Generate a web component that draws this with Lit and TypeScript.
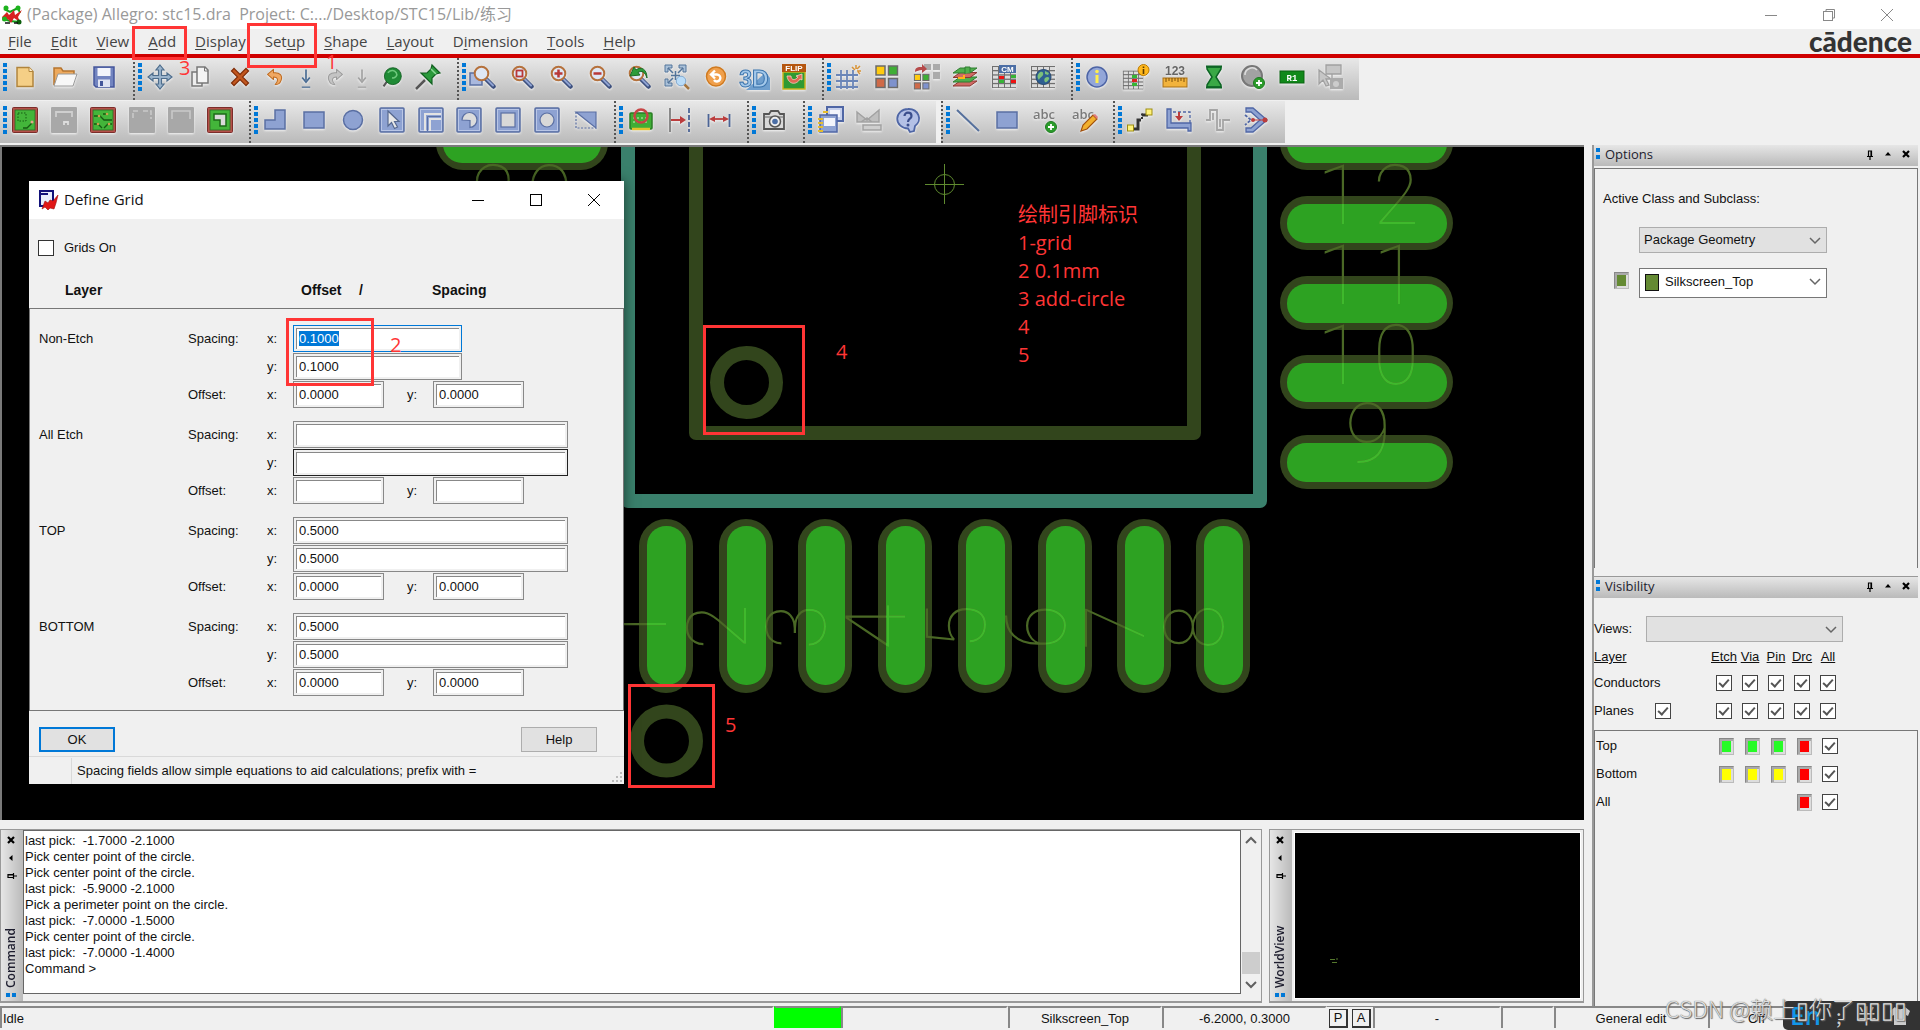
import { LitElement, html, svg, css, nothing } from "lit";
import { customElement } from "lit/decorators.js";

/* ---------- icon building blocks (26 x 26 grid) ---------- */

const BLUE = "#8ea2d2";
const LINE = "#5a6fa3";

const lens = (inner: unknown) => svg`
  <path d="M15 15 L22.500 22.500" stroke="#3c4f7d" stroke-width="4.500" stroke-linecap="round"/>
  <path d="M15.500 15 L22 21.500" stroke="#8ea2d2" stroke-width="2" stroke-linecap="round"/>
  <circle cx="10.500" cy="9.500" r="6.800" fill="#dfe7f4" stroke="#b5713c" stroke-width="2"/>
  ${inner}`;

const board = (inner: unknown) => svg`
  <rect x="0.500" y="0.500" width="25" height="25" rx="1" fill="#b5504a" stroke="#7c2d2a"/>
  <rect x="3" y="3" width="20" height="20" fill="#43b53a" stroke="#2c6b27" stroke-width="0.800"/>
  ${inner}`;

const disabledBoard = (inner: unknown) => svg`
  <rect x="0" y="0" width="26" height="26" rx="1" fill="#a8a8a8"/>
  ${inner}`;

const blueTile = (inner: unknown) => svg`
  <rect x="1" y="1" width="24" height="24" rx="1" fill="${BLUE}" stroke="${LINE}" stroke-width="1.500"/>
  <rect x="2.500" y="2.500" width="21" height="21" fill="none" stroke="#b9c6e6"/>
  ${inner}`;

const cells = (colors: string[]) => svg`
  ${colors.map((c, i) => svg`<rect x="${2 + (i % 2) * 12.5}" y="${2 + Math.floor(i / 2) * 12.5}" width="9" height="9" fill="${c}" stroke="#6b6b6b" stroke-width="1.500"/>`)}`;

const sheet = svg`
  <rect x="1" y="2" width="24" height="22" fill="#6f6f6f"/>
  ${[0, 1, 2, 3, 4].map(r => [0, 1, 2, 3].map(c => svg`<rect x="${2 + c * 6}" y="${3 + r * 4.3}" width="5" height="3" fill="#dcdcdc"/>`))}`;

const greenPlus = svg`
  <circle cx="19" cy="19" r="5.500" fill="#2b9c2b" stroke="#1d7a20"/>
  <path d="M19 16v6M16 19h6" stroke="#fff" stroke-width="1.800"/>`;

const undoArrow = (a: string, b: string) => svg`
  <path d="M3 10 L10 4 V8 C18 7 21 12 19 17 C18 20 15 22 12 22 C16 18 16 13 10 13 V16 Z" fill="${a}" stroke="${b}" stroke-width="1.200" stroke-linejoin="round"/>`;

const downArrow = (c: string) => svg`
  <path d="M13 4v13" stroke="${c}" stroke-width="2"/>
  <path d="M8.500 13.500 L13 19 L17.500 13.500" fill="none" stroke="${c}" stroke-width="2"/>
  <path d="M8 25h10" stroke="${c}" stroke-width="1.500"/>`;

const icons: Record<string, unknown> = {
  newFile: svg`<path d="M5 3.500h12l4 4v15H5z" fill="#f5cf86" stroke="#b0843c" stroke-width="1.500"/><path d="M17 3.500v4h4" fill="#fff0cf" stroke="#b0843c"/>`,
  open: svg`<path d="M2 21V4h7l2 3h11v5" fill="#eda95d" stroke="#b5742e" stroke-width="1.500"/><path d="M2 22 L6 10h19l-4 12z" fill="#f7f7f7" stroke="#9a9a9a"/>`,
  save: svg`<path d="M3 3h20v20H5l-2-2z" fill="#7284c0" stroke="#44569a" stroke-width="1.500"/><rect x="6.500" y="4" width="13" height="8" fill="#f2f4fb"/><rect x="7" y="15.500" width="12" height="7.500" fill="#dfe3f2"/><rect x="9" y="17" width="3" height="5" fill="#44569a"/>`,
  move: svg`<path d="M13 1 L17 6H14.500V11.500H20V9l5 4-5 4v-2.500H14.500V20H17l-4 5-4-5h2.500v-5.500H6V17l-5-4 5-4v2.500h5.500V6H9z" fill="#9bb4cc" stroke="#4e6d8c" stroke-width="1.200"/>`,
  copy: svg`<path d="M5 8h10v14H5z" fill="#eee" stroke="#777" stroke-width="1.500"/><path d="M10 3h8l3 3v13H10z" fill="#f4f4f4" stroke="#777" stroke-width="1.500"/><path d="M17.500 3v4H21" fill="none" stroke="#777"/>`,
  cut: svg`<path d="M7 7 L19 19 M19 7 L7 19" stroke="#7e2c08" stroke-width="4.800" stroke-linecap="square"/><path d="M7 7 L19 19 M19 7 L7 19" stroke="#c0561f" stroke-width="2.500" stroke-linecap="square"/>`,
  undo: undoArrow("#f0a863", "#bd6a20"),
  down: downArrow("#4a6c94"),
  redo: svg`<g transform="translate(26 0) scale(-1 1)">${undoArrow("#c4c4c4", "#9b9b9b")}</g>`,
  downOff: downArrow("#a2a2a2"),
  ball: svg`<path d="M8 17 L3 24" stroke="#555" stroke-width="2.500"/><circle cx="14" cy="12" r="10" fill="#1f8a35" stroke="#0f5a1f"/><path d="M8 8c4-4 8-3 10 0s-1 7-5 6" fill="none" stroke="#6ec97c" stroke-width="1.800"/>`,
  pin: svg`<path d="M10 16 L1 25" stroke="#555" stroke-width="2.500"/><path d="M17 1 L25 9 L21 10 L17 14 L17 20 L6 9 L12 9 L16 5 Z" fill="#2a9a3b" stroke="#125f20" stroke-width="1.200"/><path d="M16 5l5 5" stroke="#8bd996" stroke-width="1.500"/>`,
  zoomArea: svg`<rect x="0" y="9" width="12" height="12" fill="#a9b8de" stroke="${LINE}" stroke-width="1.500"/><g transform="translate(1 0)">${lens(nothing)}</g>`,
  zoomFit: lens(svg`<rect x="7.500" y="6.500" width="6" height="6" fill="none" stroke="#b93838" stroke-width="1.800"/>`),
  zoomIn: lens(svg`<path d="M10.500 5.500v8M6.500 9.500h8" stroke="#b93838" stroke-width="2.500"/>`),
  zoomOut: lens(svg`<path d="M6.500 9.500h8" stroke="#b93838" stroke-width="2.500"/>`),
  zoomPrev: lens(svg`<path d="M21 14 C21 5 15 2 10 6 L8 3 L4 12 L14 11 L12 8.500 C16 6 19 8 21 14z" fill="#2e9c3a" stroke="#1c6b26"/>`),
  zoomCenter: svg`<path d="M1 8V1h7v3H4v4zM15 1h7v7h-3V4h-4zM1 15v7h7v-3H4v-4z" fill="#a9c0d8" stroke="#52749a"/><path d="M9 9L4 4M14 9l5-5M9 14l-5 5M11.500 7v9M7 11.500h9" fill="none" stroke="#52749a" stroke-width="1.500"/><circle cx="17" cy="17" r="4.800" fill="#b9dcf8" stroke="#7fa6cd"/><path d="M20.500 20.500 L25 25" stroke="#a4753f" stroke-width="2.500"/>`,
  refresh: svg`<circle cx="13" cy="12.500" r="9.500" fill="#f0a04c" stroke="#cf7a20" stroke-width="1.500"/><path d="M9 10.500h5a3.500 3.500 0 1 1-3 5.500M12 6.500l-4 4 4 4" fill="none" stroke="#fff" stroke-width="2.400"/>`,
  flip: svg`<rect x="2" y="8" width="22" height="17" fill="#2f9a33" stroke="#c7b21e" stroke-width="1.500"/><path d="M6 12c1 8 9 10 13 3l2 1V10l-6 2 2 1c-3 4-7 3-7-1z" fill="#e06a53" stroke="#f6d3c6" stroke-width="0.800"/><rect x="1" y="0" width="24" height="8" fill="#b5560f"/><text x="13" y="7" class="t-flip">FLIP</text>`,
  three: svg`<path d="M4 26 H28 V14 L24 8 Z" fill="#6f9fce"/><text x="12" y="23" class="t-3d">3D</text>`,
  grid: svg`<path d="M6 6v19M12 6v19M18 6v19M1 11h22M1 17h22M1 23h22" stroke="#6b86b8" stroke-width="1.800"/><path d="M21 1v4M26 7h-4M17 3l3 3M25 2l-3 3M23 8l2 2" stroke="#d79235" stroke-width="1.500"/>`,
  palette: cells(["#ffcb0f", "#3fae35", "#cf6a48", "#7e92cd"]),
  paletteMove: svg`<rect x="11" y="0" width="7" height="6" fill="#ababab"/><rect x="20" y="0" width="7" height="6" fill="#ababab"/><rect x="20" y="8" width="7" height="7" fill="#ababab"/><path d="M2 8c0-5 3-5 7-5V0l5 5-5 4V6C6 6 4 7 2 8z" fill="#b54a4a"/><g transform="translate(0 9) scale(.68)">${cells(["#ffcb0f", "#3fae35", "#cf6a48", "#7e92cd"])}</g>`,
  layers: svg`${[19, 15, 10.5, 6].map((y, i) => svg`<path d="M1 ${y + 3} L8 ${y - 2} H25 L18 ${y + 3} Z" fill="${i % 2 ? "#4fae4c" : "#d06a64"}" stroke="${i % 2 ? "#2f7d31" : "#8d3733"}"/>`)}<path d="M13 10V3h5v5" fill="#4fae4c" stroke="#2f7d31"/><path d="M6 14h6v-3" fill="none" stroke="#ffb11a" stroke-width="2"/>`,
  cm: svg`${sheet}<rect x="8" y="1" width="17" height="8" fill="#4b6ea5"/><text x="16.500" y="8" class="t-cm">CM</text><rect x="8" y="12" width="5" height="3" fill="#e11"/><rect x="8" y="16" width="5" height="3" fill="#36b436"/><rect x="20" y="16" width="5" height="3" fill="#e11"/><rect x="20" y="11" width="5" height="3" fill="#36b436"/>`,
  web: svg`${sheet}<circle cx="13.500" cy="13" r="7.500" fill="#2e5f92" stroke="#274a73"/><path d="M9 9c3-3 5 0 4 2s-3 2-4 5c-2-2-2-5 0-7zM15 14c2-2 5-1 4 1s-3 4-4 3-1-3 0-4zM15 7l4 2-1 2-3-1z" fill="#7cc07a"/>`,
  info: svg`<circle cx="13" cy="13" r="10" fill="#93a6d8" stroke="#4d64a5" stroke-width="1.500"/><path d="M13 11v8" stroke="#ffee4d" stroke-width="3"/><circle cx="13" cy="7.500" r="1.800" fill="#ffee4d"/>`,
  infoSheet: svg`<g transform="translate(-1 5) scale(.85)">${sheet}</g><rect x="9" y="11" width="5" height="3" fill="#36b436"/><rect x="9" y="15" width="5" height="3" fill="#d22"/><rect x="9" y="19" width="5" height="3" fill="#36b436"/><circle cx="20.500" cy="6" r="5.500" fill="#ffb81c" stroke="#b97800"/><path d="M20.500 5v5M20.500 2.500v1.500" stroke="#5b3b00" stroke-width="1.600"/>`,
  measure: svg`<text x="13" y="11" class="t-123">123</text><rect x="1" y="14" width="24" height="9" fill="#f2b33c" stroke="#a86e12"/><path d="M4 14v4M7 14v3M10 14v4M13 14v3M16 14v4M19 14v3M22 14v4" stroke="#7a4e08"/>`,
  hourglass: svg`<path d="M6 3h14v2l-5 8 5 8v2H6v-2l5-8-5-8z" fill="#3aa845" stroke="#0d6424" stroke-width="1.500"/><path d="M5 2.500h16M5 23.500h16" stroke="#0d6424" stroke-width="2"/>`,
  sphereAdd: svg`<circle cx="12" cy="12" r="10" fill="#a2a2a2" stroke="#777" stroke-width="2"/><path d="M5 11a7 7 0 0 1 12-5" fill="none" stroke="#ddd" stroke-width="1.500"/>${greenPlus}`,
  r1: svg`<rect x="1" y="7" width="24" height="12" fill="#11891a" stroke="#0a6211"/><text x="13" y="17" class="t-r1">R1</text>`,
  hostOff: svg`<path d="M8 1h15v9H8zM14 10v4M1 6v14l4-4 3 6 3-1-3-6h5z" fill="#c6c6c6" stroke="#a0a0a0" stroke-width="1.300"/><path d="M12 14h13v11H12z" fill="#ababab"/><circle cx="18" cy="20" r="3" fill="#ccc"/>`,
  b1: board(svg`<rect x="6" y="6" width="8" height="8" fill="none" stroke="#165b12" stroke-dasharray="1.500 1.500"/><path d="M11 21h4l5-5" fill="none" stroke="#165b12" stroke-width="1.300"/><circle cx="20" cy="15" r="1.500" fill="#e2a78a"/>`),
  b2: disabledBoard(svg`<path d="M5 10V5h16v5" fill="none" stroke="#cfcfcf" stroke-width="1.800"/><path d="M13 18v-3h4v3" fill="none" stroke="#ddd" stroke-width="1.800"/>`),
  b3: board(svg`<path d="M4 9h6l4 4h8M4 17h4l4 4M14 21l4-4h4M13 7h5" fill="none" stroke="#165b12" stroke-width="1.300"/><circle cx="9" cy="9" r="1.300" fill="#c9a04a"/><circle cx="17" cy="7" r="1.300" fill="#c9a04a"/><circle cx="8" cy="17" r="1.300" fill="#c9a04a"/><circle cx="19" cy="17" r="1.300" fill="#c9a04a"/>`),
  b4: disabledBoard(svg`<path d="M4 11V4h6M14 4h8v8" fill="none" stroke="#c9c9c9" stroke-width="1.600" stroke-dasharray="5 2"/>`),
  b5: disabledBoard(svg`<path d="M4 12V4h18v8" fill="none" stroke="#c9c9c9" stroke-width="1.600"/>`),
  b6: board(svg`<path d="M7 7h12v12h-6v-6H7z" fill="#dadada" stroke="#1d6a18" stroke-width="1.500"/>`),
  poly: svg`<path d="M13 3h10v19H3V13h10z" fill="${BLUE}" stroke="${LINE}" stroke-width="1.500"/>`,
  rect: svg`<rect x="3" y="5" width="20" height="16" fill="${BLUE}" stroke="${LINE}" stroke-width="1.500"/>`,
  circle: svg`<circle cx="13" cy="13" r="9.500" fill="${BLUE}" stroke="${LINE}" stroke-width="1.500"/>`,
  select: blueTile(svg`<path d="M9 4v15l3.500-3.500 3 6 3-1.500-3-5.500H20z" fill="#e8e8e8" stroke="#56688f" stroke-width="1.200"/>`),
  pathTile: blueTile(svg`<path d="M7 24V7h16M12 24V12h11" fill="none" stroke="#e3e3e3" stroke-width="2"/><path d="M9.500 24V9.500H23" fill="none" stroke="${LINE}"/>`),
  arcTile: blueTile(svg`<path d="M6 13a7.500 7.500 0 1 1 8 7.500v-7z" fill="#dcdcdc" stroke="${LINE}" stroke-width="1.200"/>`),
  boxTile: blueTile(svg`<rect x="6" y="6" width="14" height="14" fill="#d8d8d8" stroke="${LINE}" stroke-width="1.200"/>`),
  roundTile: blueTile(svg`<circle cx="13" cy="13" r="7" fill="#d8d8d8" stroke="${LINE}" stroke-width="1.200"/>`),
  wedge: svg`<path d="M3 5h20v16z" fill="${BLUE}" stroke="${LINE}" stroke-width="1.200"/><path d="M3 5v16h20" fill="none" stroke="${LINE}" stroke-width="1.200" stroke-dasharray="2 1.500"/>`,
  chipRing: svg`<rect x="2" y="6" width="22" height="16" rx="1" fill="#3fae35" stroke="#2a7c24" stroke-width="1.500"/><path d="M4 22h18" stroke="#e2c32c" stroke-width="2.500"/><path d="M5 11h16M5 15h16" stroke="#c9f0b8" stroke-width="1.200" stroke-dasharray="2 2"/><circle cx="13" cy="9" r="6.500" fill="none" stroke="#c74545" stroke-width="2.500"/>`,
  extend: svg`<path d="M3 1v24" stroke="#888" stroke-width="2"/><path d="M22 1v24" stroke="#4c6495" stroke-width="1.800" stroke-dasharray="5 2"/><path d="M4 13h11" stroke="#bb3d3d" stroke-width="2"/><path d="M13 9l6 4-6 4z" fill="#bb3d3d"/>`,
  dimension: svg`<path d="M2.500 7v13M23.500 7v13" stroke="#4c6495" stroke-width="1.800"/><path d="M5 12h16" stroke="#bb3d3d" stroke-width="1.800"/><path d="M9 9l-6 3 6 3zM17 9l6 3-6 3z" fill="#bb3d3d"/>`,
  camera: svg`<path d="M3 7h5l2-3h7l2 3h4v15H3z" fill="#d9d9d9" stroke="#555" stroke-width="1.800"/><path d="M3 10h20" stroke="#666"/><circle cx="14" cy="14.500" r="5.500" fill="#eee" stroke="#555" stroke-width="1.500"/><circle cx="14" cy="14.500" r="2.800" fill="#4b6ea5"/>`,
  cascade: svg`<rect x="10" y="0" width="16" height="14" fill="#c6d0ec" stroke="#4f66a5" stroke-width="2"/><rect x="13" y="3" width="10" height="7" fill="#f2f4fb"/><rect x="3" y="8" width="17" height="17" fill="#8ea2d2" stroke="#4f66a5" stroke-width="1.500"/><rect x="7" y="11" width="11" height="8" fill="#f2f4fb"/><path d="M1 12h5M1 16h5M1 20h5M1 24h5M6 5h5" stroke="#e5bc2d" stroke-width="1.800"/>`,
  mailOff: svg`<path d="M1 5l10 8L23 3v12H1zM5 15l6-4 5 4" fill="#bfbfbf" stroke="#a2a2a2" stroke-width="1.500"/><path d="M7 18h18v5H7z" fill="#cfcfcf" stroke="#a2a2a2" stroke-width="1.500"/>`,
  help: svg`<path d="M13 2a10.500 9.500 0 1 0 0 19.500l2 3.500 4-1 1-5A10.500 9.500 0 0 0 13 2z" fill="#b4c1e6" stroke="#4f66a5" stroke-width="1.800"/><path d="M9.500 9c0-4.500 7-4.500 7 0 0 3-3.500 2.500-3.500 6" fill="none" stroke="#3b4f8d" stroke-width="2.200"/><circle cx="13" cy="18" r="1.500" fill="#3b4f8d"/>`,
  line: svg`<path d="M2 3 L24 24" stroke="#56709c" stroke-width="2"/>`,
  textAdd: svg`<text x="11" y="12" class="t-abc">abc</text><g transform="translate(-1 1)">${greenPlus}</g>`,
  textEdit: svg`<text x="11" y="12" class="t-abc">abc</text><path d="M9 24l2-6L21 8l4 4-10 10z" fill="#f2b02e" stroke="#a2520f" stroke-width="1.200"/><path d="M21 8l4 4 1-2-3-3z" fill="#e07b7b"/>`,
  route: svg`<path d="M4 22h7V13h3M15 8h6" fill="none" stroke="#333" stroke-width="3"/><path d="M15 12V6" stroke="#333" stroke-width="2" stroke-dasharray="2 1.500"/><rect x="0.500" y="18" width="6" height="6" fill="#fff27a" stroke="#9c8b10"/><rect x="19" y="2" width="6" height="6" fill="#fff27a" stroke="#9c8b10"/>`,
  slide: svg`<path d="M1 2h4v14h20v8h-3v-3H1z" fill="${BLUE}" stroke="#4f66a5" stroke-width="1.300"/><path d="M7 5h17v11" fill="none" stroke="#4f66a5" stroke-dasharray="3 2" stroke-width="1.300"/><path d="M13 5v5" stroke="#bb3d3d" stroke-width="2"/><path d="M9 9h8l-4 5z" fill="#bb3d3d"/>`,
  waveOff: svg`<path d="M1 13h4V3h7v20h6V13h7M8 13V6M15 20v-8" fill="none" stroke="#a5a5a5" stroke-width="1.800"/>`,
  vertex: svg`<path d="M2 1h7l14 12L9 25H2v-4h5l9-8-9-8H2z" fill="${BLUE}" stroke="#4f66a5" stroke-width="1.300"/><path d="M1 8l6 5-6 5" fill="none" stroke="#4f66a5" stroke-width="1.800" stroke-dasharray="3 1.500"/><circle cx="9" cy="13" r="2" fill="#bb3d3d"/><circle cx="21" cy="13" r="2.500" fill="#bb3d3d"/><path d="M10 13h9" stroke="#bb3d3d"/>`,
};

type Tool = [string, string, string?];

const row1: Tool[][] = [
  [["newFile", "New"], ["open", "Open"], ["save", "Save"]],
  [["move", "Move"], ["copy", "Copy"], ["cut", "Delete"], ["undo", "Undo", "mid"], ["down", "Undo list", "small"], ["redo", "Redo", "small"], ["downOff", "Redo list", "small"], ["ball", "Fix", "mid"], ["pin", "Unfix"]],
  [["zoomArea", "Zoom points"], ["zoomFit", "Zoom fit"], ["zoomIn", "Zoom in"], ["zoomOut", "Zoom out"], ["zoomPrev", "Zoom previous"], ["zoomCenter", "Zoom selection"], ["refresh", "Redraw"], ["three", "3D canvas"], ["flip", "Flip design"]],
  [["grid", "Grid toggle"], ["palette", "Color"], ["paletteMove", "Shadow toggle"], ["layers", "Cross section"], ["cm", "Constraint manager"], ["web", "Net schedule"]],
  [["info", "Show element"], ["infoSheet", "Constraint info"], ["measure", "Show measure"], ["hourglass", "Wait"], ["sphereAdd", "Add pin"], ["r1", "Label refdes"], ["hostOff", "Host"]],
];

const row2: Tool[][] = [
  [["b1", "General edit"], ["b2", "Placement edit"], ["b3", "Etch edit"], ["b4", "Flow planning"], ["b5", "Signal integrity"], ["b6", "Shape edit"]],
  [["poly", "Shape add"], ["rect", "Rectangle shape"], ["circle", "Circle shape"], ["select", "Select shape"], ["pathTile", "Void polygon"], ["arcTile", "Void edit"], ["boxTile", "Void rectangle"], ["roundTile", "Void circle"], ["wedge", "Island delete"]],
  [["chipRing", "Inspect"], ["extend", "Extend"], ["dimension", "Linear dimension"]],
  [["camera", "Capture"]],
  [["cascade", "Reports"], ["mailOff", "Mail"], ["help", "Help"]],
  [["line", "Add line"], ["rect", "Add rectangle"], ["textAdd", "Add text"], ["textEdit", "Edit text"]],
  [["route", "Add connect"], ["slide", "Slide"], ["waveOff", "Delay tune"], ["vertex", "Vertex"]],
];

const menus: [string, string, string][] = [
  ["", "F", "ile"], ["", "E", "dit"], ["", "V", "iew"], ["", "A", "dd"], ["", "D", "isplay"], ["Set", "u", "p"],
  ["", "S", "hape"], ["", "L", "ayout"], ["D", "i", "mension"], ["", "T", "ools"], ["", "H", "elp"],
];

const chevron = svg`<path d="M1 1l5 5 5-5" fill="none" stroke="#666" stroke-width="1.500"/>`;

/* ---------- dock caption ---------- */

@customElement("dock-caption")
class DockCaption extends LitElement {
  static properties = { label: { type: String }, vertical: { type: Boolean, reflect: true } };
  declare label: string;
  declare vertical: boolean;

  static styles = css`
    :host { display: flex; align-items: center; gap: 5px; height: 21px; padding: 0 6px 4px 2px; box-sizing: border-box;
      background: linear-gradient(#e6e6e6, #bababa); font: 13px/18px "Open Sans", sans-serif; color: #1d1d2e; }
    :host([vertical]) { flex-direction: column-reverse; width: 22px; height: auto; padding: 4px 2px 4px 0;
      background: linear-gradient(90deg, #e6e6e6, #bababa); font: 600 12px/18px "Open Sans", sans-serif; }
    .pips { display: grid; grid-template-rows: 4px 4px; gap: 3px; width: 4px; }
    :host([vertical]) .pips { grid-template: 4px / 4px 4px; width: auto; gap: 2px; }
    .pips i { background: #0078d7; }
    .label { flex: 1; }
    :host([vertical]) .label { writing-mode: vertical-rl; transform: rotate(180deg); }
    .tools { display: flex; gap: 6px; align-items: center; }
    :host([vertical]) .tools { flex-direction: column-reverse; }
    button { border: 0; padding: 0; background: none; width: 12px; height: 12px; display: block; }
    svg { display: block; width: 12px; height: 12px; }
    :host([vertical]) svg { transform: rotate(-90deg); }
  `;

  render() {
    return html`
      <span class="pips"><i></i><i></i></span>
      <span class="label">${this.label}</span>
      <span class="tools">
        <button aria-label="Pin"><svg viewBox="0 0 12 12"><path d="M4.500 8V3h3v5M7 3v5M3 8.500h6M6 9v3" fill="none" stroke="#000" stroke-width="1.200"/></svg></button>
        <button aria-label="Collapse"><svg viewBox="0 0 12 12"><path d="M3 7.500L6 4l3 3.500z"/></svg></button>
        <button aria-label="Close"><svg viewBox="0 0 12 12"><path d="M3 3l6 6M9 3l-6 6" stroke="#000" stroke-width="2.200"/></svg></button>
      </span>`;
  }
}

/* ---------- toolbars ---------- */

@customElement("tool-row")
class ToolRow extends LitElement {
  static properties = { groups: { attribute: false }, split: { type: Number } };
  declare groups: Tool[][];
  declare split: number;

  static styles = css`
    :host { display: flex; height: 42px; margin-bottom: 1px; }
    .group { display: flex; align-items: center; box-sizing: border-box; padding: 0 9px 4px 3px;
      background: linear-gradient(#e8e8e8, #bababa); }
    .group + .group { border-left: 2px dotted #555; padding-left: 3px; }
    .group.apart { margin-left: 5px; }
    .grip { flex: none; width: 4px; height: 28px; margin-right: -2px; background: repeating-linear-gradient(#0078d7 0 4px, transparent 4px 6px); }
    button { flex: 1; min-width: 0; height: 34px; padding: 0; border: 0; background: none; display: grid; place-items: center; }
    .mid { flex: none; width: 32px; }
    .small { flex: none; width: 28px; }
    svg { width: 26px; height: 26px; overflow: visible; display: block; filter: drop-shadow(0 1px 1px #f4f4f4); }
    .mid svg, .small svg { width: 22px; height: 22px; }
    text { text-anchor: middle; font-family: "Liberation Sans", sans-serif; font-weight: 700; }
    .t-flip { font-size: 8px; fill: #fff; }
    .t-3d { font-size: 23px; fill: #a3c8ea; stroke: #3d75ad; stroke-width: 1px; }
    .t-cm { font-size: 8px; fill: #fff; }
    .t-123 { font-size: 12px; fill: #666; }
    .t-r1 { font-size: 9px; fill: #fff; font-family: "Liberation Mono", monospace; }
    .t-abc { font-size: 13px; fill: #7a7a7a; font-family: "Open Sans", sans-serif; font-weight: 600; }
  `;

  private width(g: Tool[]) {
    const small = g.some(t => t[2]);
    return small ? 324 : 17 + Math.ceil((116 * g.length) / 3);
  }

  render() {
    return this.groups.map((g, i) => html`
      <div class="group ${i === this.split ? "apart" : ""}" style="width:${this.width(g)}px">
        <span class="grip"></span>
        ${g.map(([name, label, size]) => html`
          <button class="${size ?? ""}" aria-label=${label}><svg viewBox="0 0 26 26" fill="none">${icons[name]}</svg></button>`)}
      </div>`);
  }
}

/* ---------- define grid dialog ---------- */

const layers = [
  { name: "Non-Etch", sx: "0.1000", sy: "0.1000", ox: "0.0000", oy: "0.0000" },
  { name: "All Etch", sx: "", sy: "", ox: "", oy: "" },
  { name: "TOP", sx: "0.5000", sy: "0.5000", ox: "0.0000", oy: "0.0000" },
  { name: "BOTTOM", sx: "0.5000", sy: "0.5000", ox: "0.0000", oy: "0.0000" },
];

@customElement("grid-dialog")
class GridDialog extends LitElement {
  static styles = css`
    :host { display: flex; flex-direction: column; background: #f0f0f0; color: #111; font: 13px/16px "Liberation Sans", Arial, sans-serif; box-shadow: 0 0 12px #0008; }
    header { display: flex; align-items: center; height: 38px; background: #fff; padding: 0 1px 0 10px; font: 15px/20px "Open Sans", sans-serif; }
    header .mark { width: 20px; height: 20px; margin-right: 5px; }
    header .title { flex: 1; padding-bottom: 2px; }
    header button { width: 58px; height: 38px; border: 0; background: none; display: grid; place-items: center; padding: 0; }
    header button svg { width: 14px; height: 14px; }
    .on { display: flex; align-items: center; gap: 10px; padding: 20px 0 0 9px; line-height: 18px; }
    .on input { appearance: none; margin: 0; width: 16px; height: 16px; background: #fff; border: 1px solid #333; box-sizing: border-box; }
    .heads { display: grid; grid-template-columns: 236px 58px 73px 1fr; padding: 25px 0 10px 36px; font-size: 14px; font-weight: 700; }
    .fields { border: 1px solid #777; padding: 16px 0 0 9px; display: flex; flex-direction: column; gap: 13px; height: 386px; }
    .layer { display: grid; grid-template-columns: 149px 79px 26px 91px 23px 26px 1fr; grid-auto-rows: 27px; row-gap: 1px; align-items: center; }
    .name { grid-column: 1; }
    .kind { grid-column: 2; }
    .ax { grid-column: 3; }
    .ay { grid-column: 6; }
    .layer input { box-sizing: border-box; height: 27px; width: 91px; border: 1px solid #888; outline: 2px solid #f0f0f0; outline-offset: -3px;
      box-shadow: inset 3px 3px 0 0 #888; padding: 0 5px 1px; background: #fff; font: inherit; color: #111; border-radius: 0; }
    .layer input.wide { grid-column: 4 / 8; width: 275px; }
    .layer input.cut { width: 169px; }
    .layer input.dark { border-color: #222; }
    .layer .hot { border-color: #0078d7; }
    .hot::selection { background: #0078d7; color: #fff; }
    footer { display: flex; justify-content: space-between; padding: 16px 27px 4px 10px; }
    footer button { width: 76px; height: 25px; background: #e1e1e1; border: 1px solid #adadad; font: inherit; color: #111; padding: 0; }
    footer .ok { border: 2px solid #0078d7; }
    .hint { display: flex; border-top: 1px solid #d9d9d9; padding-top: 1px; }
    .hint i { width: 42px; border-right: 1px solid #d9d9d9; }
    .hint span { flex: 1; padding: 5px; line-height: 16px; }
    .hint svg { width: 12px; height: 12px; align-self: end; }
  `;

  firstUpdated() {
    const first = this.renderRoot.querySelector<HTMLInputElement>(".hot");
    first?.focus({ preventScroll: true });
    first?.select();
  }

  render() {
    return html`
      <header>
        <svg class="mark" viewBox="0 0 20 20"><rect x="1" y="1" width="13" height="15" fill="#e8eefc" stroke="#12127a" stroke-width="2"/><path d="M2 4h7" stroke="#12127a" stroke-width="2"/><path d="M3 19l3-8 3 2 2-3 3 1 5-6-2 8-2 6-4-1-2 2-3-3z" fill="#e01616" stroke="#9c0c0c" stroke-width=".600"/></svg>
        <span class="title">Define Grid</span>
        <button aria-label="Minimize"><svg viewBox="0 0 14 14"><path d="M1 7.500h12" stroke="#000"/></svg></button>
        <button aria-label="Maximize"><svg viewBox="0 0 14 14"><rect x="1.500" y="1.500" width="11" height="11" fill="none" stroke="#000"/></svg></button>
        <button aria-label="Close"><svg viewBox="0 0 14 14"><path d="M1 1l12 12M13 1L1 13" stroke="#000"/></svg></button>
      </header>
      <label class="on"><input type="checkbox" />Grids On</label>
      <div class="heads"><span>Layer</span><span>Offset</span><span>/</span><span>Spacing</span></div>
      <div class="fields">
        ${layers.map((l, i) => html`
          <div class="layer">
            <span class="name">${l.name}</span><span class="kind">Spacing:</span>
            <label class="ax" for="sx${i}">x:</label><input id="sx${i}" class="wide ${i === 0 ? "cut hot" : ""}" .value=${l.sx} />
            <label class="ax" for="sy${i}">y:</label><input id="sy${i}" class="wide ${i === 0 ? "cut" : i === 1 ? "dark" : ""}" .value=${l.sy} />
            <span class="kind">Offset:</span>
            <label class="ax" for="ox${i}">x:</label><input id="ox${i}" .value=${l.ox} />
            <label class="ay" for="oy${i}">y:</label><input id="oy${i}" .value=${l.oy} />
          </div>`)}
      </div>
      <footer><button class="ok">OK</button><button>Help</button></footer>
      <div class="hint"><i></i><span>Spacing fields allow simple equations to aid calculations; prefix with =</span>
        <svg viewBox="0 0 12 12" fill="#bbb"><path d="M8 0h2v2H8zM4 4h2v2H4zM8 4h2v2H8zM0 8h2v2H0zM4 8h2v2H4zM8 8h2v2H8z"/></svg></div>`;
  }
}

/* ---------- drawing area ---------- */

const bottomPads = [666, 746, 825, 905, 985, 1065, 1144, 1223];
const rightPads = [143, 223, 303, 382, 462];

@customElement("board-canvas")
class BoardCanvas extends LitElement {
  static styles = css`
    :host { display: block; position: relative; overflow: hidden; background: #000; border: 2px solid #7a7a7a; border-right: 0; border-bottom: 0; }
    .art { position: absolute; inset: 0; width: 100%; height: 100%; }
    .mask { fill: #32451c; }
    .pad { fill: #2da222; }
    .num { font: 100 84px Roboto, "Liberation Sans", sans-serif; text-anchor: middle; fill: #4a6825; }
    .num.lit { fill: #3fb92c; }
    grid-dialog { position: absolute; left: 27px; top: 34px; width: 595px; height: 603px; }
  `;

  render() {
    const digits = (lit: boolean) => svg`
      <g class="num ${lit ? "lit" : ""}" clip-path=${lit ? "url(#copper)" : nothing}>
        ${bottomPads.map((x, i) => svg`<text transform="translate(${x} 627) rotate(-90)">${i + 1}</text>`)}
        ${["12", "11", "10"].map((s, i) => svg`<text x="1340" y="${224 + i * 80}">${s[0]}</text><text x="1396" y="${224 + i * 80}">${s[1]}</text>`)}
        <text x="1368" y="462">9</text>
        <text x="494" y="224">2</text><text x="550" y="224">9</text>
      </g>`;
    return html`
      <svg class="art" fill="none" aria-hidden="true">
        <g transform="translate(-2 -147)">
          <path d="M628 140V501H1260V140" stroke="#3a806c" stroke-width="14" stroke-linejoin="round"/>
          <path d="M696 140V433H1194V140" stroke="#32451c" stroke-width="14" stroke-linejoin="round"/>
          <g class="mask">
            ${bottomPads.map(x => svg`<rect x="${x - 27}" y="519" width="54" height="174" rx="27"/>`)}
            ${rightPads.map(y => svg`<rect x="1280" y="${y - 27}" width="173" height="54" rx="27"/>`)}
            <rect x="436" y="116" width="172" height="54" rx="27"/>
          </g>
          <g class="pad">
            ${bottomPads.map(x => svg`<rect x="${x - 19}" y="526" width="39" height="159" rx="19"/>`)}
            ${rightPads.map(y => svg`<rect x="1287" y="${y - 19}" width="160" height="39" rx="19"/>`)}
            <rect x="443" y="124" width="158" height="39" rx="19"/>
          </g>
          <clipPath id="copper">
            ${bottomPads.map(x => svg`<rect x="${x - 19}" y="526" width="39" height="159" rx="19"/>`)}
            ${rightPads.map(y => svg`<rect x="1287" y="${y - 19}" width="160" height="39" rx="19"/>`)}
          </clipPath>
          ${digits(false)}${digits(true)}
          <circle cx="746.500" cy="382.500" r="29.500" stroke="#32451c" stroke-width="14"/>
          <circle cx="666.500" cy="741" r="29.500" stroke="#32451c" stroke-width="14"/>
          <path d="M925 184.500H964M944.500 164V204" stroke="#5f8a2f"/>
          <circle cx="944.500" cy="184.500" r="10" stroke="#5f8a2f"/>
        </g>
      </svg>
      <grid-dialog></grid-dialog>`;
  }
}

/* ---------- side panels ---------- */

@customElement("side-panels")
class SidePanels extends LitElement {
  static styles = css`
    :host { display: flex; flex-direction: column; gap: 8px; border-left: 2px solid #999; padding-right: 2px; font: 13px/16px "Liberation Sans", Arial, sans-serif; color: #111; }
    section { display: flex; flex-direction: column; }
    .options { height: 423px; }
    .visibility { flex: 1; border: 1px solid #999; border-width: 1px 0 0; }
    .body { flex: 1; margin-top: 2px; border: 1px solid #777; border-bottom: 0; padding: 22px 8px; }
    .pair { display: grid; grid-template-columns: 14px 188px; column-gap: 11px; align-items: center; padding: 20px 0 0 11px; row-gap: 15px; }
    .drop { position: relative; grid-column: 2; display: block; }
    .drop svg { position: absolute; right: 6px; top: 10px; width: 12px; height: 8px; pointer-events: none; }
    .chip { position: absolute; left: 6px; top: 6px; width: 12px; height: 15px; border: 1px solid #111; background: #648a33; pointer-events: none; }
    select { appearance: none; width: 100%; height: 26px; border: 1px solid #adadad; background: #e1e1e1; font: inherit; color: #111; padding: 0 20px 0 4px; border-radius: 0; display: block; }
    select.white { height: 30px; background: #fff; border-color: #777; padding: 0 20px 3px 25px; }
    .swatch { width: 15px; height: 17px; padding: 0; border: 1px solid #888; border-right-color: #bbb; border-bottom-color: #bbb; box-shadow: inset 3px 3px 0 -1px #aaa, inset 0 0 0 2px #ddd; display: block; margin: auto; }
    .pair .swatch { margin: 0 0 5px; }
    .olive { background: #648a33; }
    .green { background: #26fb26; }
    .yellow { background: #ff0; }
    .red { background: #f00; }
    .views { display: grid; grid-template-columns: 52px 197px; align-items: center; padding: 18px 0 7px; }
    table { border-collapse: collapse; table-layout: fixed; width: 247px; }
    .lead { width: 117px; }
    th, td { padding: 0; font-weight: 400; text-align: center; height: 28px; white-space: nowrap; }
    thead th { height: 20px; text-decoration: underline; vertical-align: top; }
    th:first-child, tbody th { text-align: left; }
    .both { display: flex; gap: 21px; align-items: center; }
    input { appearance: none; width: 16px; height: 16px; margin: 0 auto; background: #fff; border: 1px solid #444; box-sizing: border-box; display: block; position: relative; }
    .both input { margin: 0; }
    input:checked::after { content: ""; position: absolute; left: 4px; top: 1px; width: 4px; height: 8px; border: solid #555; border-width: 0 2px 2px 0; transform: rotate(42deg); }
    .list { flex: 1; border: 1px solid #777; border-bottom: 0; margin-top: 5px; padding: 1px 0 0 1px; }
  `;

  private tick(label: string) {
    return html`<input type="checkbox" checked aria-label=${label} />`;
  }

  render() {
    const cols = ["Etch", "Via", "Pin", "Drc", "All"];
    const rows: [string, string[]][] = [["Top", ["green", "green", "green", "red"]], ["Bottom", ["yellow", "yellow", "yellow", "red"]], ["All", ["", "", "", "red"]]];
    return html`
      <section class="options">
        <dock-caption label="Options"></dock-caption>
        <div class="body">
          <label for="cls">Active Class and Subclass:</label>
          <div class="pair">
            <span class="drop"><select id="cls"><option>Package Geometry</option></select><svg viewBox="0 0 12 8">${chevron}</svg></span>
            <button class="swatch olive" aria-label="Subclass color"></button>
            <span class="drop"><select class="white" aria-label="Subclass"><option>Silkscreen_Top</option></select><i class="chip"></i><svg viewBox="0 0 12 8">${chevron}</svg></span>
          </div>
        </div>
      </section>
      <section class="visibility">
        <dock-caption label="Visibility"></dock-caption>
        <div class="views"><label for="views">Views:</label><span class="drop"><select id="views"><option></option></select><svg viewBox="0 0 12 8">${chevron}</svg></span></div>
        <table>
          <thead><tr><th class="lead">Layer</th>${cols.map(c => html`<th>${c}</th>`)}</tr></thead>
          <tbody>
            <tr><th>Conductors</th>${cols.map(c => html`<td>${this.tick(`Conductors ${c}`)}</td>`)}</tr>
            <tr><th><label class="both">Planes<input type="checkbox" checked /></label></th>${cols.map(c => html`<td>${this.tick(`Planes ${c}`)}</td>`)}</tr>
          </tbody>
        </table>
        <div class="list">
          <table>
            <tbody>${rows.map(([name, colors]) => html`
              <tr><th class="lead">${name}</th>
                ${colors.map((c, i) => html`<td>${c ? html`<button class="swatch ${c}" aria-label="${name} ${cols[i]}"></button>` : nothing}</td>`)}
                <td>${this.tick(`${name} All`)}</td></tr>`)}
            </tbody>
          </table>
        </div>
      </section>`;
  }
}

/* ---------- application ---------- */

const log = [
  "last pick:  -1.7000 -2.1000",
  "Pick center point of the circle.",
  "Pick center point of the circle.",
  "last pick:  -5.9000 -2.1000",
  "Pick a perimeter point on the circle.",
  "last pick:  -7.0000 -1.5000",
  "Pick center point of the circle.",
  "last pick:  -7.0000 -1.4000",
  "Command >",
];

@customElement("app-root")
class AppRoot extends LitElement {
  static styles = css`
    :host { display: grid; grid-template-rows: 29px 29px auto 1fr 24px; height: 100vh; position: relative; overflow: hidden; background: #f0f0f0; color: #111;
      font: 13px/16px "Liberation Sans", Arial, "Noto Sans CJK SC", sans-serif; }
    .title { display: flex; align-items: center; background: #fff; padding: 0 4px 0 2px; color: #999; font: 16px/20px "Open Sans", "Noto Sans CJK SC", sans-serif; }
    .title .mark { width: 20px; height: 20px; margin-right: 5px; }
    .title .name { flex: 1; white-space: pre; padding-bottom: 2px; }
    .title button { width: 58px; height: 28px; border: 0; background: none; display: grid; place-items: center; padding: 0; }
    .title button svg { width: 12px; height: 12px; }
    nav { display: flex; align-items: center; gap: 1px; border-bottom: 4px solid #cf0000; padding-bottom: 2px; font: 15px/20px "Open Sans", sans-serif; }
    nav button { border: 0; background: none; font: inherit; color: #444; padding: 0 9px; }
    nav button:first-child { padding-left: 8px; }
    nav u { text-underline-offset: 2px; }
    .brand { margin-left: auto; padding-right: 8px; font: 900 28px/20px Lato, sans-serif; color: #333; }
    .bars { padding-bottom: 1px; }
    .work { display: grid; grid-template-columns: 1fr 328px; column-gap: 8px; min-height: 0; }
    .left { display: grid; grid-template-rows: 1fr 174px; row-gap: 9px; min-height: 0; padding-bottom: 3px; }
    .docks { display: grid; grid-template-columns: 1fr 315px; column-gap: 7px; }
    .dock { display: flex; border: 1px solid #999; border-width: 1px 1px 2px; }
    .log { flex: 1; box-sizing: border-box; border: 1px solid #666; background: #fff; margin: 0 0 7px; padding: 2px 1px; resize: none; outline: 0; overflow: hidden; font: inherit; color: #111; white-space: pre; border-radius: 0; }
    .scroll { width: 20px; display: flex; flex-direction: column; align-items: center; padding: 6px 0 12px; box-sizing: border-box; }
    .scroll svg { width: 12px; height: 8px; }
    .scroll button { border: 0; padding: 0; background: none; display: block; line-height: 0; }
    .thumb { width: 18px; height: 22px; background: #cdcdcd; margin: auto 0 7px; }
    .world { flex: 1; background: #000; margin: 2px; border: 1px solid #fff; position: relative; }
    .world svg { position: absolute; left: 35px; top: 125px; width: 9px; height: 6px; }
    .status { display: grid; grid-template-columns: 1fr 67px 167px 154px 165px 46px 128px 53px 154px 212px; padding-bottom: 2px; }
    .cell { border: solid #888; border-width: 2px 0 0 2px; border-right: 2px solid #f0f0f0; text-align: center; padding: 3px 2px 1px; }
    .cell:first-child { text-align: left; padding-left: 1px; }
    .cell:last-child { text-align: left; padding-left: 38px; }
    .green { background: #0f0; border-color: #0f0; border-top-color: #888; }
    .keys { display: flex; gap: 4px; padding: 2px 2px 0; border-top: 1px solid #888; }
    .key { flex: 1; border: solid #333; border-width: 1px 2px 2px 1px; background: #f0f0f0; font: inherit; color: #111; padding: 0; }
    .marks { position: absolute; inset: 0; width: 100%; height: 100%; pointer-events: none; }
    .marks text { font: 20px "Open Sans", "Noto Sans CJK SC", sans-serif; fill: #ff3535; }
    .ime { position: absolute; right: 0; bottom: 0; width: 137px; height: 29px; background: #333; border-radius: 5px 0 0 5px; overflow: hidden; color: #ccc; display: flex; align-items: center; gap: 15px; box-sizing: border-box; padding-left: 7px; font: 20px/29px "Noto Sans CJK SC", sans-serif; }
    .ime b { font: 600 26px/29px "Open Sans", sans-serif; color: #1296e8; }
    .ime svg { flex: none; width: 22px; height: 22px; margin-left: -3px; }
    .watermark { position: absolute; right: 13px; bottom: 10px; font: 300 23px/24px "Noto Sans CJK SC", sans-serif; color: #ddd; text-shadow: 0 0 1px #555, 1px 1px 1px #666; white-space: nowrap; }
  `;

  render() {
    return html`
      <div class="title">
        <svg class="mark" viewBox="0 0 20 20" fill="none"><path d="M2 4l6 3 8-4M2 14l6 2 9 1M16 3l2 5" stroke="#16a01a" stroke-width="2"/><path d="M0 12l5-5 2 3 5-5 1 5 7-5-4 7 2 5-6-4-3 5-3-4-5 2z" fill="#d92020"/><circle cx="4" cy="3" r="2.500" fill="#1db31d"/><circle cx="16" cy="3" r="2.500" fill="#1db31d"/><circle cx="2.500" cy="14" r="2.500" fill="#1db31d"/><circle cx="17" cy="17" r="2.500" fill="#0b5d0b"/><path d="M3 18h5M12 18h4" stroke="#111" stroke-width="1.500"/></svg>
        <span class="name">(Package) Allegro: stc15.dra  Project: C:.../Desktop/STC15/Lib/练习</span>
        <button aria-label="Minimize"><svg viewBox="0 0 12 12"><path d="M0 6.500h12" stroke="#888"/></svg></button>
        <button aria-label="Restore"><svg viewBox="0 0 12 12" fill="none" stroke="#888"><rect x=".500" y="2.500" width="9" height="9"/><path d="M3 2V.500h8.500V9H10"/></svg></button>
        <button aria-label="Close"><svg viewBox="0 0 12 12"><path d="M0 0l12 12M12 0L0 12" stroke="#888"/></svg></button>
      </div>
      <nav>${menus.map(([a, k, b]) => html`<button>${a}<u>${k}</u>${b}</button>`)}<span class="brand">cādence</span></nav>
      <div class="bars">
        <tool-row .groups=${row1} .split=${-1}></tool-row>
        <tool-row .groups=${row2} .split=${5}></tool-row>
      </div>
      <div class="work">
        <div class="left">
          <board-canvas></board-canvas>
          <div class="docks">
            <div class="dock">
              <dock-caption vertical label="Command"></dock-caption>
              <textarea class="log" aria-label="Command log" .value=${log.join("\n")}></textarea>
              <div class="scroll">
                <button aria-label="Scroll up"><svg viewBox="0 0 12 8"><path d="M1 7l5-5 5 5" fill="none" stroke="#606060" stroke-width="2"/></svg></button>
                <span class="thumb"></span>
                <button aria-label="Scroll down"><svg viewBox="0 0 12 8"><path d="M1 1l5 5 5-5" fill="none" stroke="#606060" stroke-width="2"/></svg></button>
              </div>
            </div>
            <div class="dock">
              <dock-caption vertical label="WorldView"></dock-caption>
              <div class="world"><svg viewBox="0 0 9 6"><path d="M0 1.500h5M2 4.500h5M6 1h2" stroke="#55782c"/></svg></div>
            </div>
          </div>
        </div>
        <side-panels></side-panels>
      </div>
      <div class="status">
        <span class="cell">Idle</span><span class="cell green"></span><span class="cell"></span>
        <span class="cell">Silkscreen_Top</span><span class="cell">-6.2000, 0.3000</span>
        <span class="keys"><button class="key">P</button><button class="key">A</button></span>
        <span class="cell">-</span><span class="cell"></span><span class="cell">General edit</span><span class="cell">Off</span>
      </div>
      <svg class="marks" fill="none">
        <g stroke="#ff3535" stroke-width="3">
          <rect x="133.500" y="27.500" width="52" height="31"/>
          <rect x="248.500" y="24.500" width="67" height="42"/>
          <rect x="287.500" y="319.500" width="85" height="65"/>
          <rect x="704.500" y="326.500" width="99" height="107"/>
          <rect x="629.500" y="685.500" width="84" height="101"/>
        </g>
        <text x="179" y="75">3</text><text x="326" y="69">1</text><text x="390" y="352">2</text>
        <text x="836" y="359">4</text><text x="725" y="732">5</text>
        <text x="1018" y="222">绘制引脚标识</text><text x="1018" y="250">1-grid</text><text x="1018" y="278">2 0.1mm</text>
        <text x="1018" y="306">3 add-circle</text><text x="1018" y="334">4</text><text x="1018" y="362">5</text>
      </svg>
      <div class="ime"><b>En</b><span>;</span><span>半</span><svg viewBox="0 0 22 22"><path d="M6 2l-5 4 2 5 2-1v10h12V10l2 1 2-5-5-4c-2 3-8 3-10 0z" fill="#ccc"/></svg></div>
      <div class="watermark">CSDN @赖上▯你了▯▯▯▯</div>`;
  }
}
